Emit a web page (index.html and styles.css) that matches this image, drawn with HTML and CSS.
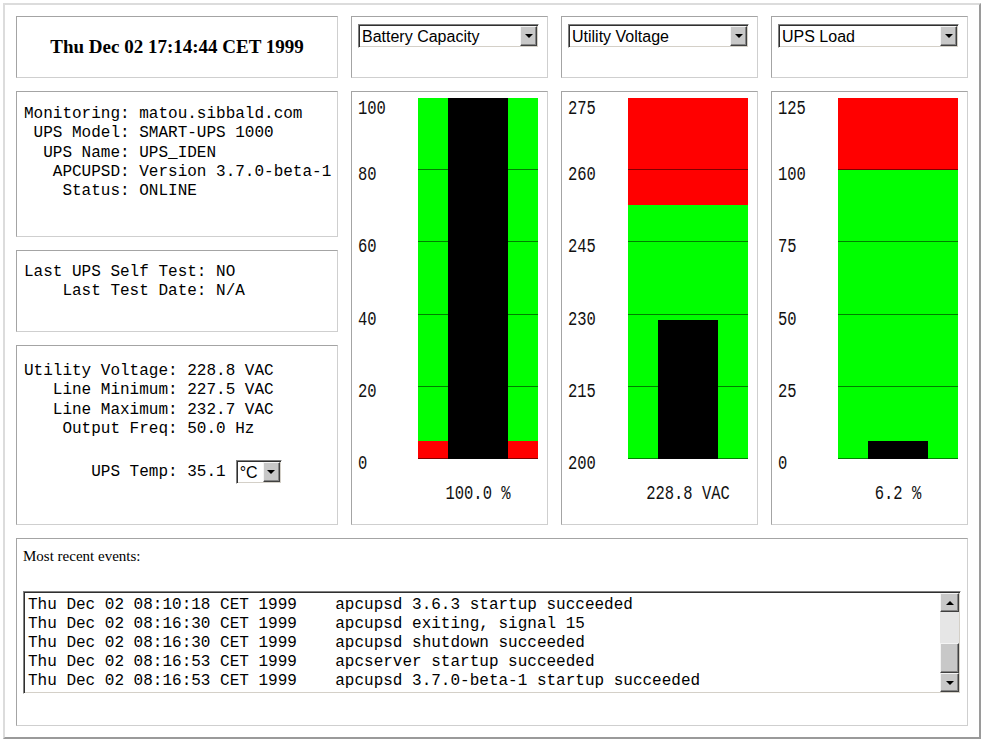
FILE: index.html
```html
<!DOCTYPE html>
<html lang="en">

<head>
    <meta charset="UTF-8">
    <meta name="viewport" content="width=device-width, initial-scale=1.0">
    <title>apcupsd status</title>
    <link rel="stylesheet" href="styles.css">
</head>

<body>
    <div class="frame">

        <div class="cell date">Thu Dec 02 17:14:44 CET 1999</div>

        <div class="cell picker">
            <div class="combo wide"><span class="combo-text">Battery Capacity</span><span class="combo-btn"><i class="arrow down"></i></span></div>
        </div>
        <div class="cell picker">
            <div class="combo wide"><span class="combo-text">Utility Voltage</span><span class="combo-btn"><i class="arrow down"></i></span></div>
        </div>
        <div class="cell picker">
            <div class="combo wide"><span class="combo-text">UPS Load</span><span class="combo-btn"><i class="arrow down"></i></span></div>
        </div>

        <div class="stack">
            <pre class="cell info info-main">Monitoring: matou.sibbald.com
 UPS Model: SMART-UPS 1000
  UPS Name: UPS_IDEN
   APCUPSD: Version 3.7.0-beta-1
    Status: ONLINE</pre>

            <pre class="cell info info-test">Last UPS Self Test: NO
    Last Test Date: N/A</pre>

            <div class="cell info info-util">
                <pre>Utility Voltage: 228.8 VAC
   Line Minimum: 227.5 VAC
   Line Maximum: 232.7 VAC
    Output Freq: 50.0 Hz</pre>
                <div class="temp-row">
                    <pre>       UPS Temp: 35.1</pre>
                    <div class="combo temp"><span class="combo-text">°C</span><span class="combo-btn"><i class="arrow down"></i></span></div>
                </div>
            </div>
        </div>

        <!-- battery capacity -->
        <div class="cell chart">
            <div class="axis">
                <span>100</span><span>80</span><span>60</span><span>40</span><span>20</span><span>0</span>
            </div>
            <div class="bar-col">
                <div class="bar">
                    <div class="zone ok" style="height: 95%"></div>
                    <div class="zone bad" style="height: 5%"></div>
                    <div class="ticks"><i></i><i></i><i></i><i></i><i></i></div>
                    <div class="level" style="height: 100%"></div>
                </div>
                <div class="reading">100.0 %</div>
            </div>
        </div>

        <!-- utility voltage -->
        <div class="cell chart">
            <div class="axis">
                <span>275</span><span>260</span><span>245</span><span>230</span><span>215</span><span>200</span>
            </div>
            <div class="bar-col">
                <div class="bar">
                    <div class="zone bad" style="height: 29.6%"></div>
                    <div class="zone ok" style="height: 70.4%"></div>
                    <div class="ticks"><i></i><i></i><i></i><i></i><i></i></div>
                    <div class="level" style="height: 38.4%"></div>
                </div>
                <div class="reading">228.8 VAC</div>
            </div>
        </div>

        <!-- ups load -->
        <div class="cell chart">
            <div class="axis">
                <span>125</span><span>100</span><span>75</span><span>50</span><span>25</span><span>0</span>
            </div>
            <div class="bar-col">
                <div class="bar">
                    <div class="zone bad" style="height: 20%"></div>
                    <div class="zone ok" style="height: 80%"></div>
                    <div class="ticks"><i></i><i></i><i></i><i></i><i></i></div>
                    <div class="level" style="height: 4.96%"></div>
                </div>
                <div class="reading">6.2 %</div>
            </div>
        </div>

        <div class="cell events">
            <div class="events-title">Most recent events:</div>
            <div class="listbox">
                <pre class="lines">Thu Dec 02 08:10:18 CET 1999    apcupsd 3.6.3 startup succeeded
Thu Dec 02 08:16:30 CET 1999    apcupsd exiting, signal 15
Thu Dec 02 08:16:30 CET 1999    apcupsd shutdown succeeded
Thu Dec 02 08:16:53 CET 1999    apcserver startup succeeded
Thu Dec 02 08:16:53 CET 1999    apcupsd 3.7.0-beta-1 startup succeeded</pre>
                <div class="scrollbar">
                    <span class="sb-btn"><i class="arrow up"></i></span>
                    <span class="sb-track"></span>
                    <span class="sb-thumb"></span>
                    <span class="sb-btn"><i class="arrow down"></i></span>
                </div>
            </div>
        </div>

    </div>
</body>
</html>
```

FILE: styles.css
```css
body {
    margin: 3px;
    background: #fff;
    color: #000;
    font-family: "Liberation Serif", serif;
}

.frame {
    box-sizing: border-box;
    width: 978px;
    height: 736px;
    padding: 11px;
    border: 2px solid;
    border-color: #dcdcdc #9a9a9a #9a9a9a #dcdcdc;
    display: grid;
    grid-template-columns: 322px repeat(3, 197px);
    grid-template-rows: 62px 434px 188px;
    gap: 13px;
}

.cell {
    box-sizing: border-box;
    border: 1px solid;
    border-color: #a4a4a4 #cfcfcf #cfcfcf #a4a4a4;
    background: #fff;
    margin: 0;
}

.date {
    display: flex;
    align-items: center;
    justify-content: center;
    font-weight: bold;
    font-size: 19px;
}

.picker {
    padding: 7px 6px;
}

/* win95 style combo box */
.combo {
    box-sizing: border-box;
    display: flex;
    height: 24px;
    border: 1px solid;
    border-color: #808080 #fff #fff #808080;
    box-shadow: inset 1px 1px #303030, inset -1px -1px #d4d0c8;
    background: #fff;
    font-family: "Liberation Sans", Arial, sans-serif;
    font-size: 16px;
    line-height: 21px;
    padding: 1px;
}

.combo.wide {
    width: 181px;
}

.combo.temp {
    width: 46px;
    margin-left: 10px;
}

.combo-text {
    flex: 1;
    padding-left: 2px;
    white-space: nowrap;
    overflow: hidden;
}

.combo-btn,
.sb-btn,
.sb-thumb {
    box-sizing: border-box;
    display: flex;
    align-items: center;
    justify-content: center;
    background: #c8c8c8;
    border: 1px solid;
    border-color: #f4f4f4 #404040 #404040 #f4f4f4;
    box-shadow: inset -1px -1px #858585;
}

.combo-btn {
    width: 17px;
    height: 20px;
}

.arrow {
    width: 0;
    height: 0;
    border-left: 4px solid transparent;
    border-right: 4px solid transparent;
}

.arrow.down {
    border-top: 4px solid #000;
}

.arrow.up {
    border-bottom: 4px solid #000;
}

.stack {
    display: flex;
    flex-direction: column;
    gap: 13px;
}

.info,
.info pre {
    font-family: "Liberation Mono", "Courier New", monospace;
    font-size: 16px;
    line-height: 19.3px;
}

.info {
    padding: 13px 7px;
}

.info pre {
    margin: 0;
}

.info-main {
    height: 146px;
}

.info-test {
    height: 82px;
    padding-top: 12px;
}

.info-util {
    flex: 1;
    padding-top: 16px;
}

.temp-row {
    display: flex;
    align-items: center;
    margin-top: 21px;
}

/* bar charts */
.chart {
    display: flex;
    align-items: flex-start;
    padding: 6px 0 0 6px;
}

.axis {
    width: 60px;
    margin-top: -5px;
    display: grid;
    grid-template-rows: repeat(5, 72.2px) 20px;
}

.axis span:first-child {
    padding-top: 5px;
}

.axis span,
.reading {
    font-family: "Liberation Mono", monospace;
    font-size: 15.5px;
    line-height: 20px;
    color: #111;
    transform: scaleY(1.35);
}

.axis span {
    display: block;
    height: 20px;
}

.bar-col {
    width: 120px;
}

.bar {
    position: relative;
    height: 361px;
    display: flex;
    flex-direction: column;
}

.zone.ok {
    background: #00ff00;
}

.zone.bad {
    background: #ff0000;
}

.ticks {
    position: absolute;
    inset: 0;
    display: flex;
    flex-direction: column;
}

.ticks i {
    flex: 1;
    border-bottom: 1px solid rgba(0, 0, 0, 0.5);
}

.level {
    position: absolute;
    left: 30px;
    bottom: 0;
    width: 60px;
    background: #000;
}

.reading {
    margin-top: 25px;
    text-align: center;
}

/* events */
.events {
    grid-column: 1 / -1;
    padding: 8px 6px;
}

.events-title {
    font-size: 15px;
    line-height: 18px;
    margin-bottom: 26px;
}

.listbox {
    box-sizing: border-box;
    height: 103px;
    display: flex;
    border: 1px solid;
    border-color: #808080 #fff #fff #808080;
    box-shadow: inset 1px 1px #303030, inset -1px -1px #d4d0c8;
    padding: 1px;
}

.lines {
    flex: 1;
    margin: 0;
    padding: 3px 3px 0;
    font-family: "Liberation Mono", "Courier New", monospace;
    font-size: 16px;
    line-height: 19px;
    overflow: hidden;
}

.scrollbar {
    width: 19px;
    display: flex;
    flex-direction: column;
}

.sb-btn {
    height: 19px;
}

.sb-track {
    height: 31px;
    background: #e6e6e6;
}

.sb-thumb {
    flex: 1;
}
```
